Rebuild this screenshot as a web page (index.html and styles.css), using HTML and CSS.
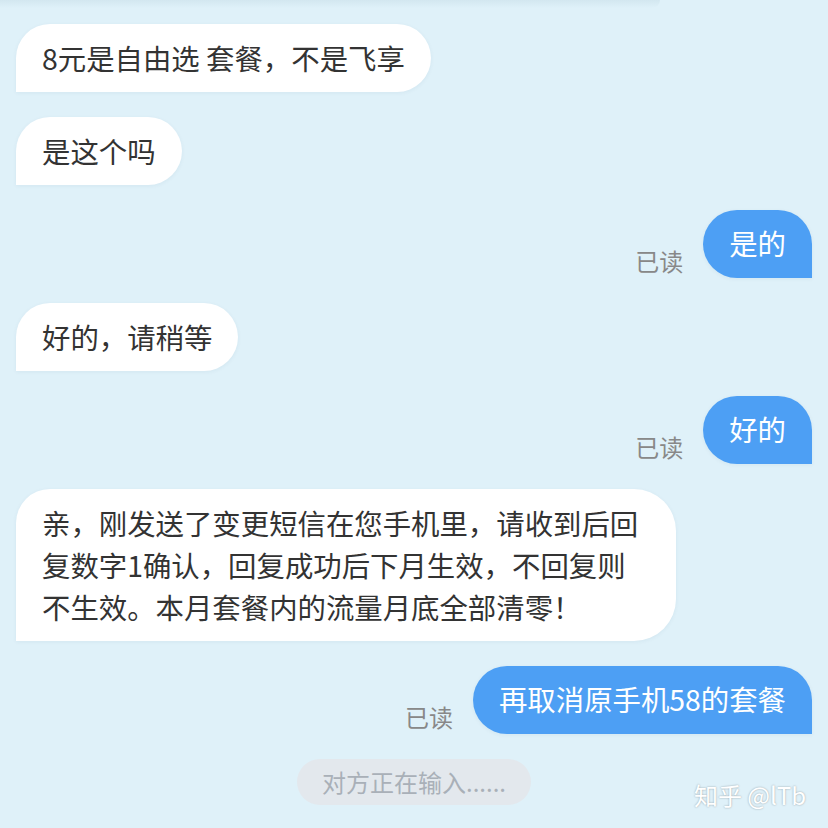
FILE: index.html
```html
<!doctype html>
<html lang="zh-CN">
<head>
<meta charset="utf-8">
<meta name="viewport" content="width=device-width, initial-scale=1">
<title>聊天记录</title>
<link rel="stylesheet" href="styles.css">
</head>
<body>

	<div class="chat">

		<div class="row left">
			<div class="bubble">8元是自由选 套餐，不是飞享</div>
		</div>

		<div class="row left">
			<div class="bubble">是这个吗</div>
		</div>

		<div class="row right">
			<span class="read">已读</span>
			<div class="bubble mine">是的</div>
		</div>

		<div class="row left">
			<div class="bubble">好的，请稍等</div>
		</div>

		<div class="row right">
			<span class="read">已读</span>
			<div class="bubble mine">好的</div>
		</div>

		<div class="row left">
			<div class="bubble wide">亲，刚发送了变更短信在您手机里，请收到后回<br>复数字1确认，回复成功后下月生效，不回复则<br>不生效。本月套餐内的流量月底全部清零！</div>
		</div>

		<div class="row right">
			<span class="read">已读</span>
			<div class="bubble mine">再取消原手机58的套餐</div>
		</div>

		<div class="row center">
			<div class="typing">对方正在输入......</div>
		</div>

	</div>

	<div class="mark">知乎 @lTb</div>

</body>
</html>
```

FILE: styles.css
```css
	html, body { height: 100%; }
	body { background-color: #dff1f9; color: #333; font-family: "Noto Sans CJK SC", "Noto Sans", sans-serif; margin: 0; overflow: hidden; position: relative; }

	.chat { display: flex; flex-direction: column; gap: 25px; padding: 24px 16px 0 16px; position: relative; }
	.chat::before { background: linear-gradient( #d3e7f0, #dff1f9 ); border-radius: 0 0 30px 0; content: ""; height: 8px; left: 0; position: absolute; top: 0; width: 660px; }

	.row { display: flex; }
	.row.left { justify-content: flex-start; }
	.row.right { align-items: flex-end; gap: 20px; justify-content: flex-end; }
	.row.center { justify-content: center; }

	.bubble { background-color: #fff; border-radius: 34px 34px 34px 0; box-shadow: 0 1px 4px rgba( 0, 60, 100, 0.06 ); font-size: 28.4px; line-height: 42px; padding: 13px 26px 13px 26px; white-space: nowrap; }
	.bubble.mine { background-color: #4d9ff4; border-radius: 34px 34px 0 34px; color: #fff; padding: 12px 26px 14px 26px; }
	.bubble.wide { border-radius: 34px 42px 42px 0; padding-right: 38px; }

	.read { color: #888; font-size: 24px; line-height: 24px; margin-bottom: 5px; }

	.typing { background-color: #e3e8ed; border-radius: 23px; color: #a9b0b8; font-size: 24px; height: 46px; line-height: 46px; padding: 0 25px; }

	.mark { bottom: 20px; color: #fff; font-size: 24px; line-height: 26px; position: absolute; right: 22px; text-shadow: 0 0 2px rgba( 0, 0, 0, 0.35 ); }
```
